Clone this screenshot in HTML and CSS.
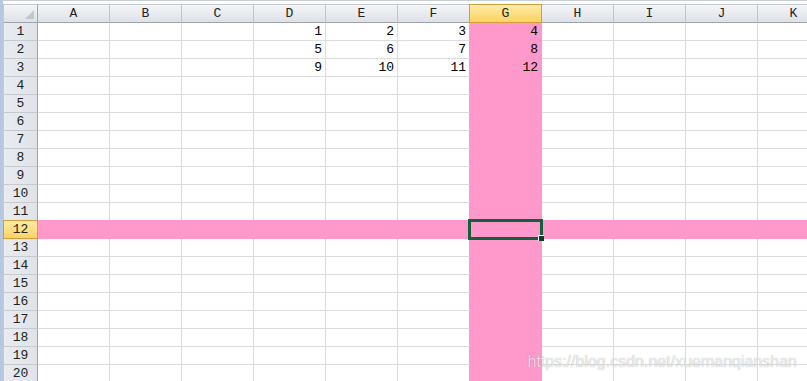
FILE: index.html
```html
<!DOCTYPE html>
<html lang="en">
<head>
    <meta charset="UTF-8">
    <meta name="viewport" content="width=device-width, initial-scale=1.0">
    <title>Sheet1</title>
    <link rel="stylesheet" href="styles.css">
</head>
<body>
    <div class="window">
        <div class="sheet">
            <div class="corner"></div>
            <div class="col-head">A</div><div class="col-head">B</div><div class="col-head">C</div><div class="col-head">D</div><div class="col-head">E</div><div class="col-head">F</div><div class="col-head active">G</div><div class="col-head">H</div><div class="col-head">I</div><div class="col-head">J</div><div class="col-head">K</div>

            <div class="row-head">1</div>
            <div class="cell"></div><div class="cell"></div><div class="cell"></div><div class="cell num">1</div><div class="cell num">2</div><div class="cell num f">3</div><div class="cell num hl">4</div><div class="cell"></div><div class="cell"></div><div class="cell"></div><div class="cell"></div>

            <div class="row-head">2</div>
            <div class="cell"></div><div class="cell"></div><div class="cell"></div><div class="cell num">5</div><div class="cell num">6</div><div class="cell num f">7</div><div class="cell num hl">8</div><div class="cell"></div><div class="cell"></div><div class="cell"></div><div class="cell"></div>

            <div class="row-head">3</div>
            <div class="cell"></div><div class="cell"></div><div class="cell"></div><div class="cell num">9</div><div class="cell num">10</div><div class="cell num f">11</div><div class="cell num hl">12</div><div class="cell"></div><div class="cell"></div><div class="cell"></div><div class="cell"></div>

            <div class="row-head">4</div>
            <div class="cell"></div><div class="cell"></div><div class="cell"></div><div class="cell"></div><div class="cell"></div><div class="cell f"></div><div class="cell hl"></div><div class="cell"></div><div class="cell"></div><div class="cell"></div><div class="cell"></div>

            <div class="row-head">5</div>
            <div class="cell"></div><div class="cell"></div><div class="cell"></div><div class="cell"></div><div class="cell"></div><div class="cell f"></div><div class="cell hl"></div><div class="cell"></div><div class="cell"></div><div class="cell"></div><div class="cell"></div>

            <div class="row-head">6</div>
            <div class="cell"></div><div class="cell"></div><div class="cell"></div><div class="cell"></div><div class="cell"></div><div class="cell f"></div><div class="cell hl"></div><div class="cell"></div><div class="cell"></div><div class="cell"></div><div class="cell"></div>

            <div class="row-head">7</div>
            <div class="cell"></div><div class="cell"></div><div class="cell"></div><div class="cell"></div><div class="cell"></div><div class="cell f"></div><div class="cell hl"></div><div class="cell"></div><div class="cell"></div><div class="cell"></div><div class="cell"></div>

            <div class="row-head">8</div>
            <div class="cell"></div><div class="cell"></div><div class="cell"></div><div class="cell"></div><div class="cell"></div><div class="cell f"></div><div class="cell hl"></div><div class="cell"></div><div class="cell"></div><div class="cell"></div><div class="cell"></div>

            <div class="row-head">9</div>
            <div class="cell"></div><div class="cell"></div><div class="cell"></div><div class="cell"></div><div class="cell"></div><div class="cell f"></div><div class="cell hl"></div><div class="cell"></div><div class="cell"></div><div class="cell"></div><div class="cell"></div>

            <div class="row-head">10</div>
            <div class="cell"></div><div class="cell"></div><div class="cell"></div><div class="cell"></div><div class="cell"></div><div class="cell f"></div><div class="cell hl"></div><div class="cell"></div><div class="cell"></div><div class="cell"></div><div class="cell"></div>

            <div class="row-head">11</div>
            <div class="cell b"></div><div class="cell b"></div><div class="cell b"></div><div class="cell b"></div><div class="cell b"></div><div class="cell f b"></div><div class="cell hl"></div><div class="cell b"></div><div class="cell b"></div><div class="cell b"></div><div class="cell b"></div>

            <div class="row-head active">12</div>
            <div class="cell hl"></div><div class="cell hl"></div><div class="cell hl"></div><div class="cell hl"></div><div class="cell hl"></div><div class="cell hl"></div><div class="cell hl sel"></div><div class="cell hl"></div><div class="cell hl"></div><div class="cell hl"></div><div class="cell hl"></div>

            <div class="row-head">13</div>
            <div class="cell"></div><div class="cell"></div><div class="cell"></div><div class="cell"></div><div class="cell"></div><div class="cell f"></div><div class="cell hl"></div><div class="cell"></div><div class="cell"></div><div class="cell"></div><div class="cell"></div>

            <div class="row-head">14</div>
            <div class="cell"></div><div class="cell"></div><div class="cell"></div><div class="cell"></div><div class="cell"></div><div class="cell f"></div><div class="cell hl"></div><div class="cell"></div><div class="cell"></div><div class="cell"></div><div class="cell"></div>

            <div class="row-head">15</div>
            <div class="cell"></div><div class="cell"></div><div class="cell"></div><div class="cell"></div><div class="cell"></div><div class="cell f"></div><div class="cell hl"></div><div class="cell"></div><div class="cell"></div><div class="cell"></div><div class="cell"></div>

            <div class="row-head">16</div>
            <div class="cell"></div><div class="cell"></div><div class="cell"></div><div class="cell"></div><div class="cell"></div><div class="cell f"></div><div class="cell hl"></div><div class="cell"></div><div class="cell"></div><div class="cell"></div><div class="cell"></div>

            <div class="row-head">17</div>
            <div class="cell"></div><div class="cell"></div><div class="cell"></div><div class="cell"></div><div class="cell"></div><div class="cell f"></div><div class="cell hl"></div><div class="cell"></div><div class="cell"></div><div class="cell"></div><div class="cell"></div>

            <div class="row-head">18</div>
            <div class="cell"></div><div class="cell"></div><div class="cell"></div><div class="cell"></div><div class="cell"></div><div class="cell f"></div><div class="cell hl"></div><div class="cell"></div><div class="cell"></div><div class="cell"></div><div class="cell"></div>

            <div class="row-head">19</div>
            <div class="cell"></div><div class="cell"></div><div class="cell"></div><div class="cell"></div><div class="cell"></div><div class="cell f"></div><div class="cell hl"></div><div class="cell"></div><div class="cell"></div><div class="cell"></div><div class="cell"></div>

            <div class="row-head">20</div>
            <div class="cell"></div><div class="cell"></div><div class="cell"></div><div class="cell"></div><div class="cell"></div><div class="cell f"></div><div class="cell hl"></div><div class="cell"></div><div class="cell"></div><div class="cell"></div><div class="cell"></div>
        </div>

        <div class="watermark">https://blog.csdn.net/xuemanqianshan</div>
    </div>
</body>
</html>
```

FILE: styles.css
```css
body {
    margin: 0;
    padding: 0;
    background: #fff;
    color: #000;
    font-family: "Liberation Mono", "DejaVu Sans Mono", monospace;
    font-size: 13px;
    overflow: hidden;
}
.window {
    position: relative;
    height: 381px;
    box-sizing: border-box;
    border-left: 3px solid #b6c8de;
    border-top: 1px solid #c6ced8;
    padding-top: 3px;
    overflow: hidden;
}
.sheet {
    display: grid;
    grid-template-columns: 35px repeat(11, 72px);
    grid-template-rows: 19px repeat(20, 18px);
}
.sheet > div {
    box-sizing: border-box;
    border-right: 1px solid #dadcdd;
    border-bottom: 1px solid #dadcdd;
    line-height: 17px;
    white-space: nowrap;
}

/* headers */
.corner, .col-head {
    background: linear-gradient(#f4f5f7, #dde1e6);
    border-top: 1px solid #c5cad1;
    border-bottom-color: #9ea4ab !important;
    border-right-color: #c0c5cc !important;
    text-align: center;
    color: #222;
}
.corner {
    position: relative;
    border-left: 1px solid #c5cad1;
    border-right-color: #9ea4ab !important;
}
.corner::after {
    content: "";
    position: absolute;
    right: 3px;
    bottom: 3px;
    border-left: 9px solid transparent;
    border-bottom: 9px solid #c3c8ce;
}
.row-head {
    background: linear-gradient(to right, #e9ecef, #dfe3e8);
    border-left: 1px solid #c5cad1;
    border-right-color: #9ea4ab !important;
    border-bottom-color: #c5cad1 !important;
    text-align: center;
    color: #222;
}
.col-head.active, .row-head.active {
    background: linear-gradient(#ffeaa6, #fbd363);
    border-color: #d19e3c !important;
}
.col-head.active {
    box-shadow: -1px 0 0 #d19e3c;
}
.row-head.active {
    box-shadow: 0 -1px 0 #d19e3c;
}

/* cells */
.num {
    text-align: right;
    padding-right: 3px;
}
.f {
    border-right-color: #ff99cc !important;
}
.b {
    border-bottom-color: #ff99cc !important;
}
.hl {
    background: #ff99cc;
    border-color: #ff99cc !important;
}
.sel {
    position: relative;
}
.sel::after {
    content: "";
    position: absolute;
    left: -2px;
    top: -2px;
    right: -2px;
    bottom: -2px;
    border: 3px solid #11603a;
}
.sel::before {
    content: "";
    position: absolute;
    z-index: 1;
    right: -3px;
    bottom: -3px;
    width: 5px;
    height: 5px;
    background: #0b3f22;
    border-left: 1px solid #fff;
    border-top: 1px solid #fff;
}

.watermark {
    position: absolute;
    right: 10px;
    bottom: 11px;
    font-family: "Liberation Sans", Arial, sans-serif;
    font-size: 16px;
    line-height: 16px;
    color: rgba(255, 255, 255, 0.75);
    text-shadow: 0 0 1px rgba(0, 0, 0, 0.35);
}
```
